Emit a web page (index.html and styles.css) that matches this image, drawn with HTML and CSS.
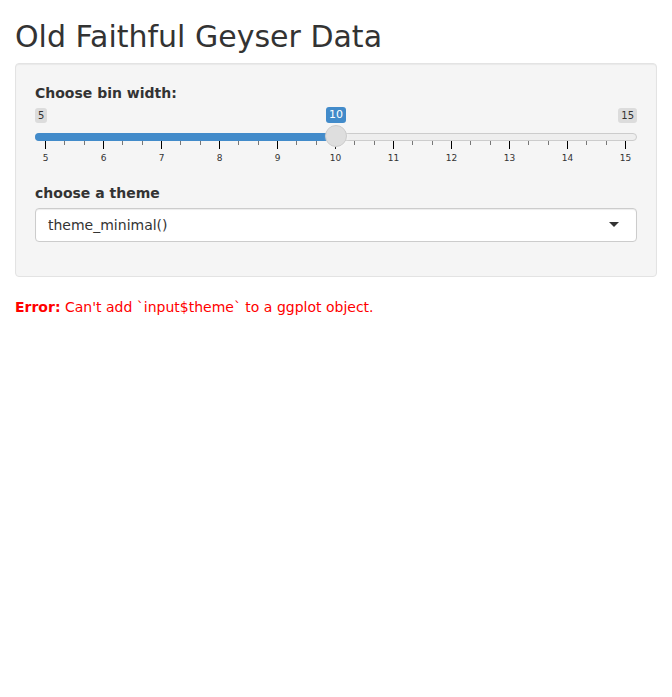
FILE: index.html
```html
<!DOCTYPE html>
<html>
<head>
<meta charset="utf-8">
<title>Old Faithful Geyser Data</title>
<link rel="stylesheet" href="styles.css">
</head>
<body>
<div class="container">
  <h2 class="title">Old Faithful Geyser Data</h2>
  <div class="well">
    <div class="form-group slider-group">
      <label class="control-label">Choose bin width:</label>
      <div class="irs">
        <div class="irs-labels">
          <span class="irs-min">5</span>
          <span class="irs-max">15</span>
        </div>
        <span class="irs-single" style="left:50%">10</span>
        <div class="irs-track">
          <div class="irs-line"></div>
          <div class="irs-bar" style="width:50%"></div>
          <div class="irs-handle" style="left:50%"></div>
        </div>
        <div class="irs-grid">
          <span class="pol"></span><span class="pol small"></span><span class="pol small"></span>
          <span class="pol"></span><span class="pol small"></span><span class="pol small"></span>
          <span class="pol"></span><span class="pol small"></span><span class="pol small"></span>
          <span class="pol"></span><span class="pol small"></span><span class="pol small"></span>
          <span class="pol"></span><span class="pol small"></span><span class="pol small"></span>
          <span class="pol"></span><span class="pol small"></span><span class="pol small"></span>
          <span class="pol"></span><span class="pol small"></span><span class="pol small"></span>
          <span class="pol"></span><span class="pol small"></span><span class="pol small"></span>
          <span class="pol"></span><span class="pol small"></span><span class="pol small"></span>
          <span class="pol"></span><span class="pol small"></span><span class="pol small"></span>
          <span class="pol"></span>
        </div>
        <div class="irs-grid-text">
          <span class="num"><span>5</span></span>
          <span class="num"><span>6</span></span>
          <span class="num"><span>7</span></span>
          <span class="num"><span>8</span></span>
          <span class="num"><span>9</span></span>
          <span class="num"><span>10</span></span>
          <span class="num"><span>11</span></span>
          <span class="num"><span>12</span></span>
          <span class="num"><span>13</span></span>
          <span class="num"><span>14</span></span>
          <span class="num"><span>15</span></span>
        </div>
      </div>
    </div>
    <div class="form-group">
      <label class="control-label">choose a theme</label>
      <div class="select-input">
        <span class="select-value">theme_minimal()</span>
        <span class="caret"></span>
      </div>
    </div>
  </div>
  <div class="error"><strong>Error:</strong> Can't add `input$theme` to a ggplot object.</div>
</div>
</body>
</html>
```

FILE: styles.css
```css
* { box-sizing: border-box; }
html, body { margin: 0; padding: 0; background: #fff; }
body {
  font-family: "DejaVu Sans", "Helvetica Neue", Helvetica, Arial, sans-serif;
  font-size: 14px;
  line-height: 20px;
  color: #333;
}
.container { padding: 0 15px; }
.title {
  margin: 20px 0 10px;
  font-size: 30px;
  line-height: 33px;
  font-weight: 500;
  color: #333;
}
.well {
  background: #f5f5f5;
  border: 1px solid #e3e3e3;
  border-radius: 4px;
  box-shadow: inset 0 1px 1px rgba(0,0,0,0.05);
  padding: 19px 19px 19px;
  margin-bottom: 20px;
}
.form-group { margin-bottom: 15px; }
.slider-group { margin-bottom: 20px; }
.control-label {
  display: block;
  font-weight: bold;
  margin-bottom: 5px;
}
.irs {
  position: relative;
  height: 55px;
}
.irs-labels {
  display: flex;
  justify-content: space-between;
  align-items: flex-start;
  height: 25px;
}
.irs-min, .irs-max, .irs-single {
  font-size: 10px;
  line-height: 13px;
  padding: 1px 3px;
  border-radius: 3px;
  background: rgba(0,0,0,0.1);
  color: #333;
  text-shadow: none;
}
.irs-single {
  position: absolute;
  top: -1px;
  transform: translateX(-50%);
  font-size: 11px;
  line-height: 14px;
  background: #428bca;
  color: #fff;
}
.irs-track {
  position: relative;
  height: 8px;
}
.irs-line {
  height: 8px;
  border: 1px solid #ccc;
  background: #eee;
  border-radius: 16px;
}
.irs-bar {
  position: absolute;
  left: 0;
  top: 0;
  height: 8px;
  background: #428bca;
  border-radius: 16px 0 0 16px;
}
.irs-handle {
  position: absolute;
  top: -8px;
  width: 22px;
  height: 22px;
  transform: translateX(-50%);
  border: 1px solid #ccc;
  background: #dedede;
  border-radius: 50%;
  box-shadow: 1px 1px 3px rgba(255,255,255,0.3);
}
.irs-grid {
  display: flex;
  justify-content: space-between;
  align-items: flex-start;
  height: 8px;
  margin: 0 11px 0 10px;
}
.pol {
  width: 1px;
  height: 8px;
  background: #000;
}
.pol.small {
  height: 4px;
  background: #777;
}
.irs-grid-text {
  display: flex;
  justify-content: space-between;
  margin: 3px 11px 0 10px;
  font-size: 9px;
  line-height: 12px;
  color: #333;
}
.num {
  width: 1px;
  display: flex;
  justify-content: center;
  white-space: nowrap;
}
.select-input {
  position: relative;
  display: flex;
  align-items: center;
  height: 34px;
  padding: 6px 12px;
  background: #fff;
  border: 1px solid #ccc;
  border-radius: 4px;
  box-shadow: inset 0 1px 1px rgba(0,0,0,0.075);
}
.caret {
  position: absolute;
  right: 17px;
  top: 50%;
  margin-top: -3px;
  width: 0;
  height: 0;
  border-style: solid;
  border-width: 5px 5px 0 5px;
  border-color: #333 transparent transparent transparent;
}
.error {
  color: red;
}
```
